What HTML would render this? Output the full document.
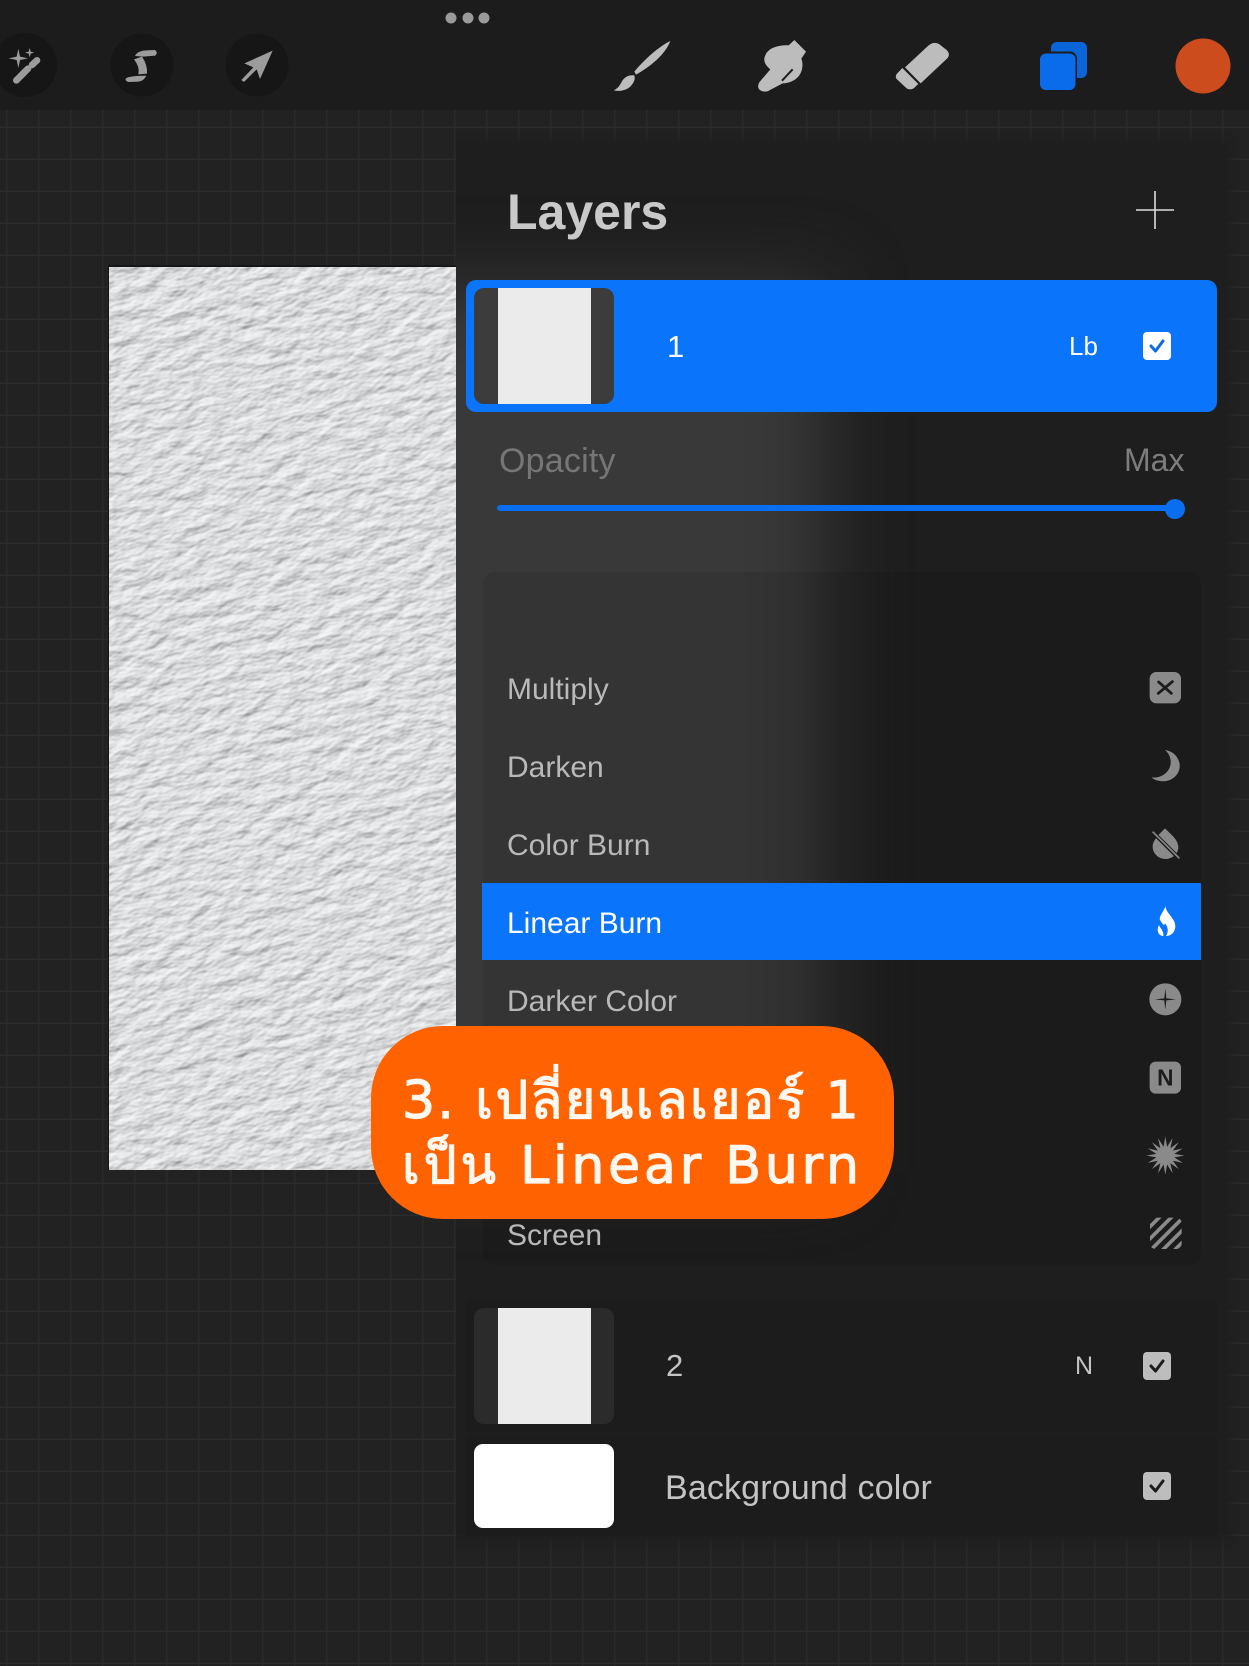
<!DOCTYPE html>
<html lang="th">
<head>
<meta charset="utf-8">
<title>Layers</title>
<style>
html,body{margin:0;padding:0;background:#232323}
body{position:relative;width:1249px;height:1666px;overflow:hidden;font-family:"Liberation Sans",sans-serif}
#canvas{position:absolute;inset:0;background-color:#222;
background-image:linear-gradient(90deg,#2b2b2b 1.5px,transparent 1.5px),linear-gradient(0deg,#2b2b2b 1.5px,transparent 1.5px);
background-size:32px 32px;background-position:6px 0}
#bar{position:absolute;left:0;top:0;width:1249px;height:110px;background:#1c1c1c}
#paper{position:absolute;left:109px;top:267px;width:347px;height:903px;overflow:hidden;background:#d5d6d6}
#paper svg{position:absolute;left:-350px;top:-250px;transform:rotate(-14deg)}
#pedge{position:absolute;left:108px;top:265px;width:348px;height:905px;background:#161616}
#panel{position:absolute;left:456px;top:145px;width:769px;height:1390px;background:#1e1e1e;box-shadow:0 0 12px 6px #1e1e1e;clip-path:inset(-16px -16px -16px 0)}
#glow{position:absolute;left:-120px;top:140px;width:490px;height:885px;background:#393939;filter:blur(38px)}
.t{position:absolute;line-height:1;white-space:nowrap}
.abs{position:absolute}
#icons{position:absolute;left:0;top:0}
.row{color:#b9b9b9;font-size:30px;left:507px}
.thumb{position:absolute;left:474px;width:140px;border-radius:10px;overflow:hidden}
.thumb i{position:absolute;left:23.5px;width:93px;top:0;bottom:0;background:#ebebeb}
#bubble{position:absolute;left:371px;top:1026px;width:523px;height:193px;background:#ff6200;border-radius:72px}
.bt{position:absolute;color:#fff8f0;font-family:"DejaVu Sans","Liberation Sans","Noto Sans CJK JP",sans-serif;font-size:52px;line-height:1;white-space:nowrap;-webkit-text-stroke:1.2px #fff8f0}
</style>
</head>
<body>
<div id="canvas"></div>
<div id="bar"></div>
<div id="panel"><div id="glow"></div>
<div class="abs" style="left:27px;top:427px;width:718px;height:693px;border-radius:12px;background:rgba(0,0,0,.08)"></div>
<div class="abs" style="left:10px;top:1155px;width:751px;height:132px;background:#1c1c1c"></div>
<div class="abs" style="left:10px;top:1291px;width:751px;height:100px;background:#1c1c1c"></div>
</div>
<div id="pedge"></div>
<div id="paper">
<svg width="1100" height="1500" viewBox="0 0 1100 1500">
<defs>
<filter id="tex" x="0" y="0" width="100%" height="100%" color-interpolation-filters="sRGB">
<feTurbulence type="fractalNoise" baseFrequency="0.045 0.085" numOctaves="3" seed="7" result="n"/>
<feDiffuseLighting in="n" surfaceScale="1.700" diffuseConstant="0.970" lighting-color="#ffffff">
<feDistantLight azimuth="250" elevation="64"/>
</feDiffuseLighting>
<feComponentTransfer>
<feFuncR type="linear" slope="1" intercept="-.01"/>
<feFuncG type="linear" slope="1" intercept="-.005"/>
<feFuncB type="linear" slope="1" intercept="0"/>
</feComponentTransfer>
</filter>
</defs>
<rect width="1100" height="1500" filter="url(#tex)"/>
</svg>
</div>

<div class="t" style="left:507px;top:187px;font-size:50px;font-weight:bold;color:#c9c9c9">Layers</div>

<div class="abs" style="left:466px;top:280px;width:751px;height:132px;background:#0a74fb;border-radius:10px"></div>
<div class="thumb" style="top:288px;height:116px;background:#3c3c3c"><i></i></div>
<div class="t" style="left:667px;top:331px;font-size:31px;color:#fff">1</div>
<div class="t" style="left:1069px;top:333px;font-size:26px;color:#fff">Lb</div>
<div class="abs" style="left:1143px;top:332px;width:28px;height:28px;background:#fff;border-radius:4px"></div>

<div class="t" style="left:499px;top:444px;font-size:34px;color:#767676;letter-spacing:.2px">Opacity</div>
<div class="t" style="left:1124px;top:444px;font-size:32px;color:#7d7d7d">Max</div>
<div class="abs" style="left:497px;top:505px;width:677px;height:6px;background:#0a6ef0;border-radius:3px"></div>
<div class="abs" style="left:1165px;top:499px;width:20px;height:20px;background:#0a6ef0;border-radius:50%"></div>

<div class="abs" style="left:482px;top:883px;width:719px;height:77px;background:#0a74fb"></div>

<div class="t row" style="top:675px">Multiply</div>
<div class="t row" style="top:753px">Darken</div>
<div class="t row" style="top:831px">Color Burn</div>
<div class="t row" style="top:909px;color:#fff">Linear Burn</div>
<div class="t row" style="top:987px">Darker Color</div>
<div class="t row" style="top:1221px">Screen</div>

<div class="thumb" style="top:1308px;height:116px;background:#2b2b2b"><i></i></div>
<div class="t" style="left:666px;top:1350px;font-size:31px;color:#c4c4c4">2</div>
<div class="t" style="left:1075px;top:1354px;font-size:25px;color:#c4c4c4">N</div>
<div class="abs" style="left:1143px;top:1352px;width:28px;height:28px;background:#bdbdbd;border-radius:4px"></div>
<div class="abs" style="left:474px;top:1444px;width:140px;height:84px;background:#fff;border-radius:9px"></div>
<div class="t" style="left:665px;top:1471px;font-size:34px;color:#c4c4c4;letter-spacing:.15px">Background color</div>
<div class="abs" style="left:1143px;top:1472px;width:28px;height:28px;background:#bdbdbd;border-radius:4px"></div>

<svg id="icons" width="1249" height="1666" viewBox="0 0 1249 1666">
<g fill="#9a9a9a"><circle cx="451" cy="18" r="5.500"/><circle cx="468" cy="18" r="5.500"/><circle cx="484" cy="18" r="5.500"/></g>
<g fill="#161616"><circle cx="25" cy="65" r="32"/><circle cx="142" cy="65" r="31.5"/><circle cx="257" cy="65" r="31.5"/></g>
<g transform="translate(0 30) scale(.33333)" fill="#9c9c9c" stroke="none">
<path d="M55 56 L60 80 L84 85 L60 90 L55 114 L50 90 L26 85 L50 80Z"/>
<path d="M89 54 L92 65 L103 68 L92 71 L89 82 L86 71 L75 68 L86 65Z"/>
<path d="M49 151 L84 116" stroke="#9c9c9c" stroke-width="20" stroke-linecap="round"/>
<path d="M96 105 L111 91" stroke="#9c9c9c" stroke-width="20" stroke-linecap="round"/>
<path d="M405 78 Q412 62 440 61 L465 60 Q475 68 466 77 L430 80Z"/>
<path d="M402 88 L426 80 Q443 105 441 131 L415 133 Q420 110 402 88Z"/>
<path d="M377 146 Q384 138 439 137 Q432 153 415 155 L386 156 Q375 153 377 146Z"/>
<path d="M818 62 L733 100 L760 112 L724 150 L732 156 L770 118 L780 147Z"/>
</g>
<g transform="translate(600 30) scale(.33333)" fill="#bcbcbc">
<path d="M211 33 C185 45 140 80 103 125 L108 134 C150 110 195 75 211 33Z"/>
<path d="M103 136 C88 134 75 140 67 152 C60 165 55 175 41 181 C60 186 85 180 95 165 C103 155 106 146 103 136Z"/>
<path d="M583 30 L618 65 L604 86 C610 100 608 122 598 136 C588 150 568 160 548 160 L510 180 C500 188 482 186 476 176 C472 168 476 158 482 152 L511 118 C494 104 488 90 497 74 C505 56 530 45 566 46Z"/>
<path d="M578 118 L546 152" stroke="#1c1c1c" stroke-width="6" fill="none"/>
<path d="M985 47 Q1000 33 1017 42 L1040 60 Q1052 72 1043 84 L962 160 L915 112Z"/>
<path d="M907 114 L955 162 L941 175 Q930 181 920 175 L890 147 Q885 141 890 132Z"/>
</g>
<rect x="1051" y="42" width="36" height="36" rx="6" fill="#0a66d8"/>
<rect x="1038" y="51.500" width="39" height="40" rx="7" fill="#1c1c1c"/>
<rect x="1040" y="53.500" width="35.500" height="36.500" rx="6" fill="#0a6cea"/>
<circle cx="1203" cy="66" r="27.500" fill="#cd4c1d"/>
<path d="M1155 191 V229 M1136 210 H1174" stroke="#dcdcdc" stroke-width="1.600" fill="none"/>
<path d="M1151 346 L1155.500 351 L1163 341" stroke="#0a6ae0" stroke-width="3" fill="none" stroke-linecap="round" stroke-linejoin="round"/>
<path d="M1151 1366 L1155.500 1371 L1163 1361" stroke="#1c1c1c" stroke-width="3" fill="none" stroke-linecap="round" stroke-linejoin="round"/>
<path d="M1151 1486 L1155.500 1491 L1163 1481" stroke="#1c1c1c" stroke-width="3" fill="none" stroke-linecap="round" stroke-linejoin="round"/>
<g transform="translate(1100 650) scale(.33333)">
<rect x="149" y="66" width="94" height="94" rx="20" fill="#8a8a8a"/>
<path d="M175 130 L217 95 M176 96 L214 130" stroke="#1c1c1c" stroke-width="8.500" stroke-linecap="round" fill="none"/>
<path d="M195 300 C228 305 241 332 239 352 C236 381 206 398 180 393 C170 391 160 388 155 382 C185 386 210 365 212 340 C213 322 206 309 195 300Z" fill="#8a8a8a"/>
<path d="M195 535 C215 555 235 570 235 592 C235 612 215 627 197 627 C175 627 158 610 158 590 C158 570 178 552 195 535Z" fill="#8a8a8a"/>
<path d="M150 538 L240 628" stroke="#1c1c1c" stroke-width="12" fill="none"/>
<path d="M158 545 L238 625" stroke="#8a8a8a" stroke-width="5" fill="none"/>
<path d="M196 768 C198 790 226 805 226 828 C226 848 212 858 198 858 C206 846 205 832 195 820 C192 830 188 822 180 810 C176 798 192 785 196 768Z" fill="#fff"/>
<path d="M177 825 C180 835 192 842 190 858 C178 858 167 845 177 825Z" fill="#fff"/>
</g>
<g transform="translate(1100 950) scale(.33333)">
<circle cx="196" cy="148" r="48" fill="#8a8a8a"/>
<path d="M196 116 L199 145 L228 148 L199 151 L196 180 L193 151 L164 148 L193 145Z" fill="#1c1c1c"/>
<rect x="149" y="335" width="94" height="96" rx="18" fill="#8a8a8a"/>
<text x="196" y="407" font-family="Liberation Sans,sans-serif" font-size="68" font-weight="bold" text-anchor="middle" fill="#1c1c1c">N</text>
<g fill="#8a8a8a">
<circle cx="196" cy="617" r="26"/>
<g id="spike"><path d="M190 594 L196 560 L202 594Z"/></g>
<use href="#spike" transform="rotate(22.500 196 617)"/><use href="#spike" transform="rotate(45 196 617)"/><use href="#spike" transform="rotate(67.500 196 617)"/>
<use href="#spike" transform="rotate(90 196 617)"/><use href="#spike" transform="rotate(112.500 196 617)"/><use href="#spike" transform="rotate(135 196 617)"/>
<use href="#spike" transform="rotate(157.500 196 617)"/><use href="#spike" transform="rotate(180 196 617)"/><use href="#spike" transform="rotate(202.500 196 617)"/>
<use href="#spike" transform="rotate(225 196 617)"/><use href="#spike" transform="rotate(247.500 196 617)"/><use href="#spike" transform="rotate(270 196 617)"/>
<use href="#spike" transform="rotate(292.500 196 617)"/><use href="#spike" transform="rotate(315 196 617)"/><use href="#spike" transform="rotate(337.500 196 617)"/>
</g>
<clipPath id="hc"><rect x="150" y="803" width="95" height="94" rx="16"/></clipPath>
<g clip-path="url(#hc)" stroke="#8a8a8a" stroke-width="11" fill="none">
<path d="M130 850 L195 785 M130 886 L231 785 M130 922 L267 785 M160 928 L280 808 M196 928 L280 844 M232 928 L280 880"/>
</g>
</g>
</svg>

<div id="bubble"></div>
<div class="bt" style="left:402px;top:1075px;letter-spacing:2.350px">3. เปลี่ยนเลเยอร์ 1</div>
<div class="bt" style="left:402px;top:1140px;letter-spacing:3.850px">เป็น Linear Burn</div>
</body>
</html>
